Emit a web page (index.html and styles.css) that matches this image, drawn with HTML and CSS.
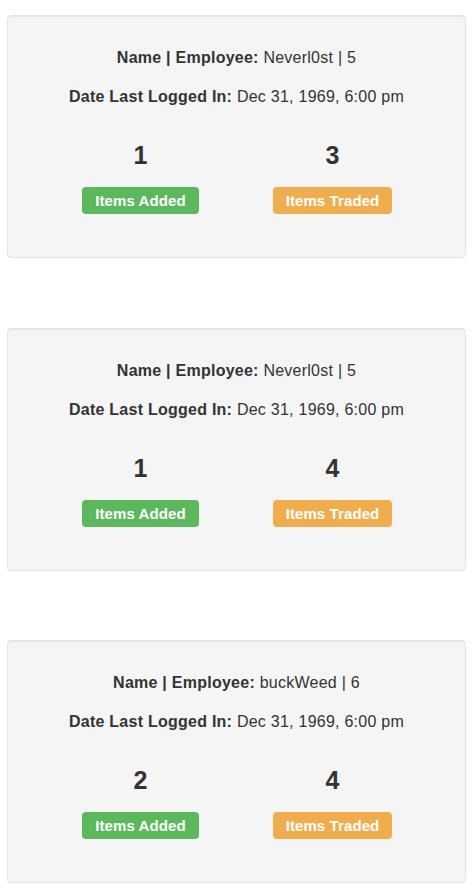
FILE: index.html
```html
<!DOCTYPE html>
<html>
<head>
<meta charset="utf-8">
<link rel="stylesheet" href="styles.css">
</head>
<body>
<div class="list">
  <div class="well">
    <p class="line"><b>Name | Employee:</b> Neverl0st | 5</p>
    <p class="line second"><b>Date Last Logged In:</b> Dec 31, 1969, 6:00 pm</p>
    <div class="stats">
      <div class="stat"><div class="num">1</div><span class="label added">Items Added</span></div>
      <div class="stat"><div class="num">3</div><span class="label traded">Items Traded</span></div>
    </div>
  </div>
  <div class="well">
    <p class="line"><b>Name | Employee:</b> Neverl0st | 5</p>
    <p class="line second"><b>Date Last Logged In:</b> Dec 31, 1969, 6:00 pm</p>
    <div class="stats">
      <div class="stat"><div class="num">1</div><span class="label added">Items Added</span></div>
      <div class="stat"><div class="num">4</div><span class="label traded">Items Traded</span></div>
    </div>
  </div>
  <div class="well">
    <p class="line"><b>Name | Employee:</b> buckWeed | 6</p>
    <p class="line second"><b>Date Last Logged In:</b> Dec 31, 1969, 6:00 pm</p>
    <div class="stats">
      <div class="stat"><div class="num">2</div><span class="label added">Items Added</span></div>
      <div class="stat"><div class="num">4</div><span class="label traded">Items Traded</span></div>
    </div>
  </div>
</div>
</body>
</html>
```
FILE: styles.css
```css
html, body {
  margin: 0;
  padding: 0;
  background: #fff;
}
body {
  font-family: "Liberation Sans", Arial, Helvetica, sans-serif;
  color: #333;
}
.list {
  display: flex;
  flex-direction: column;
  gap: 69.5px;
  padding: 15px 8px 0 7px;
}
.well {
  background: #f5f5f5;
  border: 1px solid #e3e3e3;
  border-radius: 4px;
  box-shadow: inset 0 1px 1px rgba(0,0,0,.05);
  padding: 32px 0 43px;
  text-align: center;
}
.line {
  margin: 0;
  font-size: 16px;
  line-height: 20px;
  letter-spacing: 0.25px;
}
.line b {
  font-weight: bold;
}
.second {
  margin-top: 19px;
}
.stats {
  display: grid;
  grid-template-columns: 192px 192px;
  justify-content: center;
  margin-top: 33px;
}
.stat {
  display: flex;
  flex-direction: column;
  align-items: center;
}
.num {
  font-size: 25px;
  line-height: 30px;
  font-weight: bold;
  margin-bottom: 17px;
}
.label {
  display: inline-block;
  height: 27px;
  line-height: 27px;
  padding: 0 13px;
  border-radius: 4px;
  color: #fff;
  font-weight: bold;
  font-size: 15px;
  letter-spacing: 0.1px;
}
.added { background: #5cb85c; }
.traded { background: #f0ad4e; }
```
